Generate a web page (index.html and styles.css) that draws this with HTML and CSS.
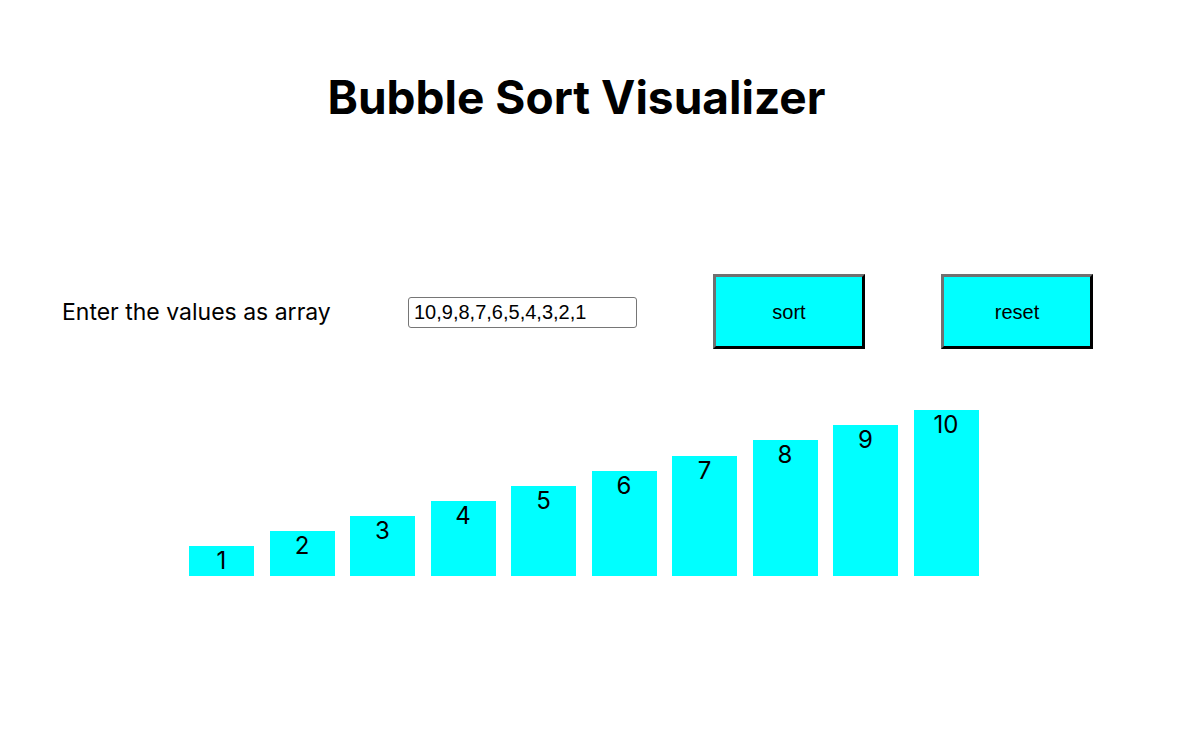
FILE: index.html
```html
<!DOCTYPE html>
<html lang="en">
<head>
<meta charset="utf-8">
<title>Bubble Sort Visualizer</title>
<link rel="stylesheet" href="styles.css">
</head>
<body>
<div class="page">
  <h1 class="title">Bubble Sort Visualizer</h1>
  <div class="controls">
    <label class="prompt" for="values">Enter the values as array</label>
    <input class="values" id="values" type="text" value="10,9,8,7,6,5,4,3,2,1">
    <button class="btn">sort</button>
    <button class="btn">reset</button>
  </div>
  <div class="bars">
    <div class="bar" style="height:30px">1</div>
    <div class="bar" style="height:45px">2</div>
    <div class="bar" style="height:60px">3</div>
    <div class="bar" style="height:75px">4</div>
    <div class="bar" style="height:90px">5</div>
    <div class="bar" style="height:105px">6</div>
    <div class="bar" style="height:120px">7</div>
    <div class="bar" style="height:136px">8</div>
    <div class="bar" style="height:151px">9</div>
    <div class="bar" style="height:166px">10</div>
  </div>
</div>
</body>
</html>
```
FILE: styles.css
```css
html, body {
  margin: 0;
  padding: 0;
  background: #ffffff;
}

body {
  font-family: Inter, "Liberation Sans", sans-serif;
  color: #000000;
}

.page {
  width: 1153px;
}

.title {
  margin: 0;
  padding-top: 69px;
  font-size: 46px;
  font-weight: 700;
  text-align: center;
  line-height: 56px;
}

.controls {
  display: flex;
  align-items: center;
  gap: 76px;
  margin-top: 149px;
  padding-left: 62px;
}

.prompt {
  flex: 0 0 auto;
  width: 270px;
  font-size: 23px;
  white-space: nowrap;
}

.values {
  flex: 0 0 auto;
  box-sizing: border-box;
  width: 229px;
  height: 31px;
  margin: 0 0 -2px 0;
  padding: 0 5px;
  border: 1px solid #767676;
  border-radius: 3px;
  font-family: "Liberation Sans", Arial, sans-serif;
  font-size: 20px;
  color: #000000;
  background: #ffffff;
}

.btn {
  flex: 0 0 auto;
  box-sizing: border-box;
  width: 152px;
  height: 75px;
  margin: 0;
  padding: 2px 0 0 0;
  background: #00ffff;
  border-style: solid;
  border-width: 3px;
  border-color: #707070 #000000 #000000 #707070;
  font-family: "Liberation Sans", Arial, sans-serif;
  font-size: 20px;
  color: #000000;
}

.bars {
  display: flex;
  align-items: flex-end;
  gap: 15.5px;
  margin-top: 61px;
  padding-left: 189px;
}

.bar {
  width: 65px;
  background: #00ffff;
  font-size: 24px;
  text-align: center;
  line-height: 29px;
}
```
